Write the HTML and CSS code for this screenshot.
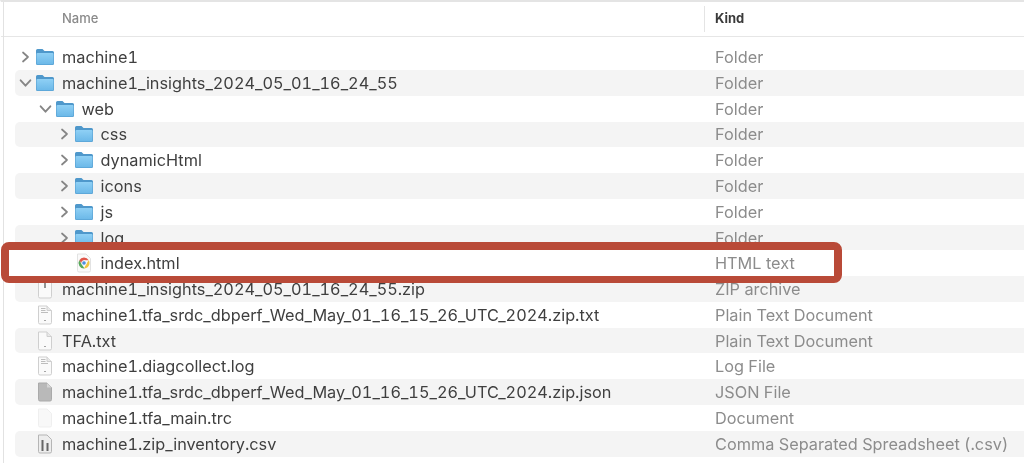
FILE: index.html
```html
<!DOCTYPE html>
<html lang="en">
<head>
<meta charset="utf-8">
<title>Finder</title>
<link rel="stylesheet" href="styles.css">
</head>
<body>
<svg class="defs" width="0" height="0" aria-hidden="true">
  <defs>
    <linearGradient id="fg" x1="0" y1="0" x2="0" y2="1"><stop offset="0" stop-color="#8fd0f5"/><stop offset="1" stop-color="#6bb8e8"/></linearGradient>
    <symbol id="folder" viewBox="0 0 20 18">
      <path d="M2.5 1h5l2 2h8A1.5 1.5 0 0 1 19 4.500V15.500A1.500 1.500 0 0 1 17.500 17h-15A1.500 1.500 0 0 1 1 15.500V2.500A1.500 1.500 0 0 1 2.500 1z" fill="#4f98cb"/>
      <path d="M2.500 5h15A1 1 0 0 1 18.500 6v9.500a1 1 0 0 1-1 1h-15a1 1 0 0 1-1-1V6a1 1 0 0 1 1-1z" fill="url(#fg)"/>
    </symbol>
    <symbol id="right" viewBox="0 0 10 12"><path d="M2.500 1.500 7.500 6l-5 4.500" fill="none" stroke="#858585" stroke-width="1.700" stroke-linecap="round" stroke-linejoin="round"/></symbol>
    <symbol id="down" viewBox="0 0 12 10"><path d="M1.500 2.500 6 7.500l4.500-5" fill="none" stroke="#858585" stroke-width="1.700" stroke-linecap="round" stroke-linejoin="round"/></symbol>
    <symbol id="doc" viewBox="0 0 16 20">
      <path d="M1.500 1h8.500l4.500 4.500v12a1.500 1.500 0 0 1-1.500 1.500H3a1.500 1.500 0 0 1-1.500-1.500z" fill="#fafafa" stroke="#cfcfcf"/>
      <path d="M10 1v4.500h4.500" fill="#e9e9e9" stroke="#cfcfcf"/>
      <path d="M7 15.500h2" stroke="#a5a5a5" stroke-width="1.200"/>
    </symbol>
    <symbol id="doctext" viewBox="0 0 16 20">
      <path d="M1.500 1h8.500l4.500 4.500v12a1.500 1.500 0 0 1-1.500 1.500H3a1.500 1.500 0 0 1-1.500-1.500z" fill="#fafafa" stroke="#cfcfcf"/>
      <path d="M10 1v4.500h4.500" fill="#e9e9e9" stroke="#cfcfcf"/>
      <path d="M4 3.500h4.500M4 5.500h4.500M4 7.500h7" stroke="#bdbdbd" stroke-width="1.200"/>
      <path d="M7 15.500h2" stroke="#a5a5a5" stroke-width="1.200"/>
    </symbol>
    <symbol id="docgrey" viewBox="0 0 16 20"><path d="M1.500 1h8.500l4.500 4.500v12a1.500 1.500 0 0 1-1.500 1.500H3a1.500 1.500 0 0 1-1.500-1.500z" fill="#b9b9b9" stroke="#aaa"/><path d="M10 1v4.500h4.500z" fill="#d5d5d5"/></symbol>
    <symbol id="docblank" viewBox="0 0 16 20"><path d="M1.500 1h8.500l4.500 4.500v12a1.500 1.500 0 0 1-1.500 1.500H3a1.500 1.500 0 0 1-1.500-1.500z" fill="#f8f8f8" stroke="#efefef"/></symbol>
    <symbol id="doczip" viewBox="0 0 16 20">
      <path d="M1.500 1h13v16.500a1.500 1.500 0 0 1-1.500 1.500H3a1.500 1.500 0 0 1-1.500-1.500z" fill="#fafafa" stroke="#cfcfcf"/>
      <path d="M8 1v8" stroke="#707070" stroke-width="1.500"/>
    </symbol>
    <symbol id="doccsv" viewBox="0 0 16 20">
      <path d="M1.500 1h8.500l4.500 4.500v12a1.500 1.500 0 0 1-1.500 1.500H3a1.500 1.500 0 0 1-1.500-1.500z" fill="#ededed" stroke="#b5b5b5"/>
      <path d="M5.500 6v11M10.500 9v8" stroke="#666" stroke-width="2"/>
    </symbol>
    <symbol id="chrome" viewBox="0 0 16 20">
      <path d="M1.500 1h8.500l4.500 4.500v12a1.500 1.500 0 0 1-1.500 1.500H3a1.500 1.500 0 0 1-1.500-1.500z" fill="#fafafa" stroke="#e2e2e2"/>
      <path d="M8 4.500a5.500 5.500 0 0 1 4.760 2.750H8z" fill="#e0564a"/>
      <path d="M3.240 7.250A5.500 5.500 0 0 1 8 4.500v2.750L6 11z" fill="#e0564a"/>
      <path d="M3.240 7.250 6.200 12l2.300 3.470A5.500 5.500 0 0 1 3.240 7.250z" fill="#57a85b"/>
      <path d="M12.760 7.250A5.500 5.500 0 0 1 8 15.500l2.200-4.500z" fill="#f0c544"/>
      <circle cx="8" cy="10" r="2.300" fill="#4d8fe0" stroke="#fff"/>
    </symbol>
  </defs>
</svg>
<main class="finder">
  <header class="head">
    <div class="col-name">Name</div>
    <div class="col-kind">Kind</div>
  </header>
  <ul class="rows">
    <li class="row"><span class="name lvl0"><svg class="tw"><use href="#right"/></svg><svg class="fld"><use href="#folder"/></svg><span>machine1</span></span><span class="kind">Folder</span></li>
    <li class="row"><span class="name lvl0"><svg class="tw"><use href="#down"/></svg><svg class="fld"><use href="#folder"/></svg><span>machine1_insights_2024_05_01_16_24_55</span></span><span class="kind">Folder</span></li>
    <li class="row"><span class="name lvl1"><svg class="tw"><use href="#down"/></svg><svg class="fld"><use href="#folder"/></svg><span>web</span></span><span class="kind">Folder</span></li>
    <li class="row"><span class="name lvl2"><svg class="tw"><use href="#right"/></svg><svg class="fld"><use href="#folder"/></svg><span>css</span></span><span class="kind">Folder</span></li>
    <li class="row"><span class="name lvl2"><svg class="tw"><use href="#right"/></svg><svg class="fld"><use href="#folder"/></svg><span>dynamicHtml</span></span><span class="kind">Folder</span></li>
    <li class="row"><span class="name lvl2"><svg class="tw"><use href="#right"/></svg><svg class="fld"><use href="#folder"/></svg><span>icons</span></span><span class="kind">Folder</span></li>
    <li class="row"><span class="name lvl2"><svg class="tw"><use href="#right"/></svg><svg class="fld"><use href="#folder"/></svg><span>js</span></span><span class="kind">Folder</span></li>
    <li class="row"><span class="name lvl2"><svg class="tw"><use href="#right"/></svg><svg class="fld"><use href="#folder"/></svg><span>log</span></span><span class="kind">Folder</span></li>
    <li class="row"><span class="name lvl2"><span class="tw"></span><svg class="doc chrome"><use href="#chrome"/></svg><span>index.html</span></span><span class="kind">HTML text</span></li>
    <li class="row"><span class="name lvl0"><span class="tw"></span><svg class="doc"><use href="#doczip"/></svg><span>machine1_insights_2024_05_01_16_24_55.zip</span></span><span class="kind">ZIP archive</span></li>
    <li class="row"><span class="name lvl0"><span class="tw"></span><svg class="doc"><use href="#doctext"/></svg><span>machine1.tfa_srdc_dbperf_Wed_May_01_16_15_26_UTC_2024.zip.txt</span></span><span class="kind">Plain Text Document</span></li>
    <li class="row"><span class="name lvl0"><span class="tw"></span><svg class="doc"><use href="#doc"/></svg><span>TFA.txt</span></span><span class="kind">Plain Text Document</span></li>
    <li class="row"><span class="name lvl0"><span class="tw"></span><svg class="doc"><use href="#doctext"/></svg><span>machine1.diagcollect.log</span></span><span class="kind">Log File</span></li>
    <li class="row"><span class="name lvl0"><span class="tw"></span><svg class="doc"><use href="#docgrey"/></svg><span>machine1.tfa_srdc_dbperf_Wed_May_01_16_15_26_UTC_2024.zip.json</span></span><span class="kind">JSON File</span></li>
    <li class="row"><span class="name lvl0"><span class="tw"></span><svg class="doc"><use href="#docblank"/></svg><span>machine1.tfa_main.trc</span></span><span class="kind">Document</span></li>
    <li class="row"><span class="name lvl0"><span class="tw"></span><svg class="doc"><use href="#doccsv"/></svg><span>machine1.zip_inventory.csv</span></span><span class="kind">Comma Separated Spreadsheet (.csv)</span></li>
  </ul>
  <div class="callout"></div>
</main>
</body>
</html>
```
FILE: styles.css
```css
* { box-sizing: border-box; }
html, body { margin: 0; padding: 0; background: #fff; overflow: hidden; }
.defs { position: absolute; }
.finder {
  position: relative;
  width: 1024px;
  height: 463px;
  margin: 0;
  border-top: 2px solid #e4e4e4;
  border-left: 1px solid transparent;
  font-family: Inter, "Liberation Sans", sans-serif;
  font-size: 16.3px;
  font-feature-settings: "tnum" 1;
  color: #3f3f3f;
  overflow: hidden;
  filter: blur(0.3px);
}
.finder::before {
  content: "";
  position: absolute;
  left: 2px;
  top: 0;
  bottom: 0;
  width: 1px;
  background: #e2e2e2;
}
.head {
  display: flex;
  height: 35px;
  align-items: center;
  border-bottom: 1px solid #e6e6e6;
  font-size: 13px;
}
.col-name { width: 703px; padding-left: 61px; padding-bottom: 2px; color: #8a8a8a; font-weight: 500; }
.col-kind {
  height: 26px;
  line-height: 24px;
  border-left: 1px solid #e4e4e4;
  padding-left: 10px;
  color: #3a3a3a;
  font-weight: 700;
}
.rows { list-style: none; margin: 7.3px 0 0; padding: 0 0 0 14px; }
.row { display: flex; align-items: center; height: 25.78px; }
.row:nth-child(even) { background: #f4f4f4; border-radius: 5px 0 0 5px; }
.name { width: 700px; display: flex; align-items: center; white-space: nowrap; }
.lvl0 { padding-left: 4px; }
.lvl1 { padding-left: 23.500px; }
.lvl2 { padding-left: 42.500px; }
.tw { width: 13px; height: 12px; flex: none; }
.fld { width: 20px; height: 18px; flex: none; margin-left: 3px; margin-right: 7px; }
.doc { width: 16px; height: 20px; flex: none; margin-left: 5px; margin-right: 9px; }
.chrome { margin-left: 5px; }
.kind { color: #8c8c8c; white-space: nowrap; }
.callout {
  position: absolute;
  left: 0;
  top: 240px;
  width: 841px;
  height: 41px;
  border: 8px solid #b94a38;
  border-bottom-width: 7px;
  border-radius: 8px;
}
```
